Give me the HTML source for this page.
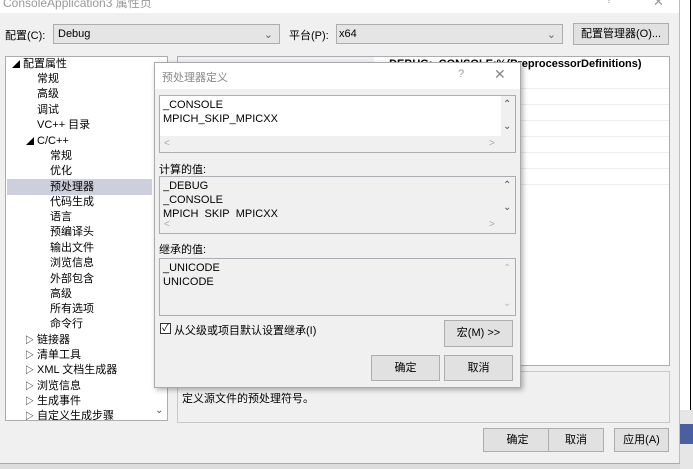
<!DOCTYPE html>
<html><head><meta charset="utf-8"><style>
*{margin:0;padding:0;box-sizing:border-box}
body{width:693px;height:469px;overflow:hidden;background:#f0f0f0;font-family:"Liberation Sans","Noto Sans CJK SC",sans-serif;font-size:11px;color:#000;position:relative}
.a{position:absolute;white-space:nowrap}
.btn{position:absolute;background:#e1e1e1;border:1px solid #adadad;text-align:center}
.tree div{position:absolute;white-space:nowrap;height:15px;line-height:15px}
.edit{position:absolute;border:1px solid #abadb3;}
.sb{position:absolute;color:#555;font-size:10px}
</style></head><body>
<div class="a" style="left:0;top:0;width:680px;height:13px;background:#fff"></div>
<div class="a" style="left:3px;top:-6px;color:#999;font-size:12px">ConsoleApplication3 属性页</div>
<div class="a" style="left:606px;top:-6px;color:#999">?</div>
<div class="a" style="left:653px;top:-6px;color:#999;font-size:13px">✕</div>
<div class="a" style="left:680px;top:0;width:13px;height:469px;background:#fff"></div>
<div class="a" style="left:690px;top:0;width:1px;height:410px;background:#000"></div>
<div class="a" style="left:680px;top:410px;width:13px;height:59px;background:#e6e6e6"></div>
<div class="a" style="left:680px;top:424px;width:13px;height:20px;background:#4a5fa0"></div>
<div class="a" style="left:679px;top:0;width:1px;height:464px;background:#bbb"></div>
<div class="a" style="left:0;top:463px;width:680px;height:6px;background:#ddd"></div>
<div class="a" style="left:0;top:463px;width:680px;height:1px;background:#aaa"></div>

<div class="a" style="left:5px;top:27px">配置(C):</div>
<div class="a" style="left:53px;top:24px;width:227px;height:20px;background:#e5e5e5;border:1px solid #adadad;padding:3px 4px">Debug<span style="position:absolute;right:6px;top:3px;color:#666">⌄</span></div>
<div class="a" style="left:289px;top:27px">平台(P):</div>
<div class="a" style="left:336px;top:24px;width:227px;height:20px;background:#e5e5e5;border:1px solid #adadad;padding:3px 2px">x64<span style="position:absolute;right:6px;top:3px;color:#666">⌄</span></div>
<div class="btn" style="left:573px;top:23px;width:96px;height:22px;line-height:20px">配置管理器(O)...</div>

<div class="a" style="left:5px;top:56px;width:163px;height:365px;background:#fff;border:1px solid #abadb3"></div>
<div class="a" style="left:7px;top:179px;width:145px;height:16px;background:#cdd0dc"></div>
<div class="tree">
<div style="left:12px;top:57px;font-size:8px">◢</div><div style="left:23px;top:57px">配置属性</div>
<div style="left:37px;top:72px">常规</div><div style="left:37px;top:87px">高级</div><div style="left:37px;top:103px">调试</div><div style="left:37px;top:118px">VC++ 目录</div>
<div style="left:26px;top:134px;font-size:8px">◢</div><div style="left:37px;top:134px">C/C++</div>
<div style="left:50px;top:149px">常规</div><div style="left:50px;top:164px">优化</div><div style="left:50px;top:180px">预处理器</div><div style="left:50px;top:195px">代码生成</div><div style="left:50px;top:210px">语言</div><div style="left:50px;top:225px">预编译头</div><div style="left:50px;top:241px">输出文件</div><div style="left:50px;top:256px">浏览信息</div><div style="left:50px;top:272px">外部包含</div><div style="left:50px;top:287px">高级</div><div style="left:50px;top:302px">所有选项</div><div style="left:50px;top:317px">命令行</div>
<div style="left:25px;top:333px;font-size:9px">▷</div><div style="left:37px;top:333px">链接器</div>
<div style="left:25px;top:348px;font-size:9px">▷</div><div style="left:37px;top:348px">清单工具</div>
<div style="left:25px;top:363px;font-size:9px">▷</div><div style="left:37px;top:363px">XML 文档生成器</div>
<div style="left:25px;top:379px;font-size:9px">▷</div><div style="left:37px;top:379px">浏览信息</div>
<div style="left:25px;top:394px;font-size:9px">▷</div><div style="left:37px;top:394px">生成事件</div>
<div style="left:25px;top:409px;font-size:9px;height:11px;overflow:hidden">▷</div><div style="left:37px;top:409px;height:11px;overflow:hidden">自定义生成步骤</div>
</div>
<div class="sb" style="left:155px;top:405px">⌄</div>

<div class="a" style="left:177px;top:56px;width:493px;height:310px;background:#fff;border:1px solid #abadb3"></div>
<div class="a" style="left:178px;top:57px;width:196px;height:16px;background:#eef0f6"></div>
<div class="a" style="left:383px;top:58px;font-weight:bold">_DEBUG;_CONSOLE;%(PreprocessorDefinitions)</div>
<div class="a" style="left:178px;top:73px;width:491px;height:113px;background:repeating-linear-gradient(#fff 0 15px,#eee 15px 16px)"></div>
<div class="a" style="left:177px;top:371px;width:493px;height:52px;border:1px solid #c8c8c8"></div>
<div class="a" style="left:182px;top:390px">定义源文件的预处理符号。</div>

<div class="btn" style="left:483px;top:428px;width:69px;height:24px;line-height:22px">确定</div>
<div class="btn" style="left:548px;top:428px;width:56px;height:24px;line-height:22px">取消</div>
<div class="btn" style="left:614px;top:428px;width:55px;height:24px;line-height:22px">应用(A)</div>

<div class="a" style="left:154px;top:62px;width:367px;height:326px;background:#f0f0f0;border:1px solid #aaa;box-shadow:2px 2px 5px rgba(0,0,0,.3)"></div>
<div class="a" style="left:155px;top:63px;width:365px;height:26px;background:#fff"></div>
<div class="a" style="left:162px;top:69px;color:#888">预处理器定义</div>
<div class="a" style="left:458px;top:68px;color:#999">?</div>
<div class="a" style="left:494px;top:66px;color:#888;font-size:14px">✕</div>

<div class="edit" style="left:159px;top:95px;width:357px;height:58px;background:#f0f0f0"><div style="position:absolute;left:0;top:0;width:341px;height:40px;background:#fff"></div></div>
<div class="a" style="left:163px;top:98px;line-height:14px">_CONSOLE<br>MPICH_SKIP_MPICXX</div>
<div class="sb" style="left:503px;top:99px">⌃</div><div class="sb" style="left:503px;top:121px">⌄</div>
<div class="sb" style="left:164px;top:138px;color:#aaa">&lt;</div><div class="sb" style="left:489px;top:138px;color:#aaa">&gt;</div>

<div class="a" style="left:159px;top:161px">计算的值:</div>
<div class="edit" style="left:159px;top:176px;width:357px;height:58px;background:#f0f0f0"></div>
<div class="a" style="left:163px;top:179px;line-height:14px;height:38px;overflow:hidden">_DEBUG<br>_CONSOLE<br>MPICH_SKIP_MPICXX</div>
<div class="sb" style="left:503px;top:180px">⌃</div><div class="sb" style="left:503px;top:202px">⌄</div>
<div class="sb" style="left:164px;top:219px;color:#aaa">&lt;</div><div class="sb" style="left:489px;top:219px;color:#aaa">&gt;</div>

<div class="a" style="left:159px;top:241px">继承的值:</div>
<div class="edit" style="left:159px;top:258px;width:357px;height:58px;background:#f0f0f0"></div>
<div class="a" style="left:163px;top:261px;line-height:14px">_UNICODE<br>UNICODE</div>
<div class="sb" style="left:503px;top:263px;color:#bbb">⌃</div><div class="sb" style="left:503px;top:298px;color:#bbb">⌄</div>

<div class="a" style="left:160px;top:323px;width:11px;height:11px;border:1px solid #333;background:#fff;font-size:10px;line-height:9px;text-align:center">✓</div>
<div class="a" style="left:174px;top:322px">从父级或项目默认设置继承(I)</div>
<div class="btn" style="left:444px;top:320px;width:69px;height:27px;line-height:25px">宏(M) &gt;&gt;</div>
<div class="btn" style="left:371px;top:355px;width:69px;height:26px;line-height:24px">确定</div>
<div class="btn" style="left:444px;top:355px;width:69px;height:26px;line-height:24px">取消</div>
</body></html>
